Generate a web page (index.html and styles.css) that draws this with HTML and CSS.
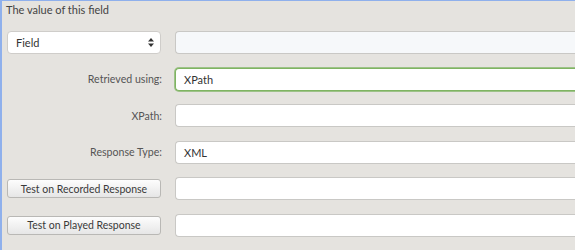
FILE: index.html
```html
<!DOCTYPE html>
<html>
  <head>
    <meta charset="utf-8">
    <title>Field value</title>
    <link rel="stylesheet" href="styles.css">
  </head>
  <body>
    <div class="panel">
      <div class="panel-title">The value of this field</div>
      <div class="form-grid">
        <div class="select-box">
          <span>Field</span>
          <svg class="select-arrows" width="6" height="9" viewBox="0 0 6 9">
            <path d="M3 0 L6 3.5 L0 3.5 Z" fill="#333"/>
            <path d="M3 9 L6 5.5 L0 5.5 Z" fill="#333"/>
          </svg>
        </div>
        <div class="field field-disabled"></div>

        <div class="label">Retrieved using:</div>
        <div class="field field-active">XPath</div>

        <div class="label">XPath:</div>
        <div class="field"></div>

        <div class="label">Response Type:</div>
        <div class="field">XML</div>

        <div class="btn-cell"><button>Test on Recorded Response</button></div>
        <div class="field"></div>

        <div class="btn-cell"><button>Test on Played Response</button></div>
        <div class="field"></div>
      </div>
    </div>
  </body>
</html>
```

FILE: styles.css
```css
* {
  margin: 0;
  box-sizing: border-box;
}
body {
  font-family: Lato, "Open Sans", sans-serif;
  font-size: 11px;
  color: #444;
  background: #e5e3df;
  overflow: hidden;
}
.panel {
  width: 575px;
  height: 250px;
  border-left: 2px solid #8fb0ec;
  border-top: 1px solid #8fb0ec;
  padding: 2px 0 0 4px;
}
.panel-title {
  height: 28px;
  color: #444;
}
.form-grid {
  display: grid;
  grid-template-columns: 154px 1fr;
  grid-auto-rows: 23px;
  column-gap: 14px;
  row-gap: 13.6px;
  padding-left: 1px;
}
.select-box {
  display: flex;
  align-items: center;
  justify-content: space-between;
  padding: 0 6px 0 8px;
  background: #fff;
  border: 1px solid #cfcdca;
  border-radius: 4px;
  color: #333;
}
.label {
  display: flex;
  align-items: center;
  justify-content: flex-end;
  font-size: 10.6px;
  color: #555;
  margin-right: -1px;
}
.field {
  display: flex;
  align-items: center;
  padding-left: 8px;
  background: #fff;
  border: 1px solid #c9c8c5;
  border-right: none;
  border-radius: 4px 0 0 4px;
  color: #333;
}
.field-disabled {
  background: #f6f8fa;
}
.field-active {
  border: 1px solid #7fb462;
  border-right: none;
  box-shadow: 0 0 0 1px rgba(127, 180, 98, 0.7);
}
.btn-cell {
  display: flex;
  align-items: center;
}
button {
  width: 154px;
  height: 19px;
  font-family: Lato, "Open Sans", sans-serif;
  font-size: 10.5px;
  font-weight: 400;
  color: #3a3a3a;
  background: linear-gradient(#fdfdfd, #e6e6e6);
  border: 1px solid #b9b8b5;
  border-radius: 3px;
  padding: 0;
}
```
